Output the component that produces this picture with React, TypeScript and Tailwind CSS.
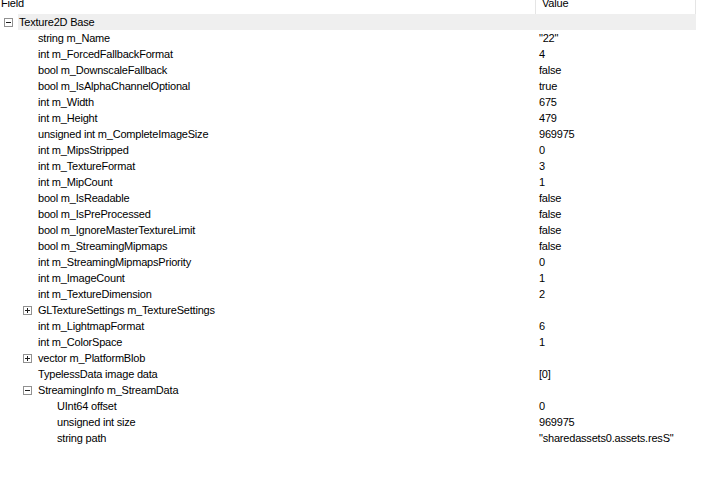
import React from "react";

type Row = {
  level: number;
  name: string;
  value?: string;
  toggle?: "open" | "closed";
  selected?: boolean;
};

const rows: Row[] = [
  { level: 0, name: "Texture2D Base", toggle: "open", selected: true },
  { level: 1, name: "string m_Name", value: '"22"' },
  { level: 1, name: "int m_ForcedFallbackFormat", value: "4" },
  { level: 1, name: "bool m_DownscaleFallback", value: "false" },
  { level: 1, name: "bool m_IsAlphaChannelOptional", value: "true" },
  { level: 1, name: "int m_Width", value: "675" },
  { level: 1, name: "int m_Height", value: "479" },
  { level: 1, name: "unsigned int m_CompleteImageSize", value: "969975" },
  { level: 1, name: "int m_MipsStripped", value: "0" },
  { level: 1, name: "int m_TextureFormat", value: "3" },
  { level: 1, name: "int m_MipCount", value: "1" },
  { level: 1, name: "bool m_IsReadable", value: "false" },
  { level: 1, name: "bool m_IsPreProcessed", value: "false" },
  { level: 1, name: "bool m_IgnoreMasterTextureLimit", value: "false" },
  { level: 1, name: "bool m_StreamingMipmaps", value: "false" },
  { level: 1, name: "int m_StreamingMipmapsPriority", value: "0" },
  { level: 1, name: "int m_ImageCount", value: "1" },
  { level: 1, name: "int m_TextureDimension", value: "2" },
  { level: 1, name: "GLTextureSettings m_TextureSettings", toggle: "closed" },
  { level: 1, name: "int m_LightmapFormat", value: "6" },
  { level: 1, name: "int m_ColorSpace", value: "1" },
  { level: 1, name: "vector m_PlatformBlob", toggle: "closed" },
  { level: 1, name: "TypelessData image data", value: "[0]" },
  { level: 1, name: "StreamingInfo m_StreamData", toggle: "open" },
  { level: 2, name: "UInt64 offset", value: "0" },
  { level: 2, name: "unsigned int size", value: "969975" },
  { level: 2, name: "string path", value: '"sharedassets0.assets.resS"' },
];

const indents = ["pl-[4px]", "pl-[23px]", "pl-[42px]"];

function Toggle({ state }: { state?: "open" | "closed" }) {
  if (!state) return <span className="w-[9px] h-[9px] shrink-0" />;
  return (
    <svg width="9" height="9" viewBox="0 0 9 9" className="shrink-0">
      <rect x="0.5" y="0.5" width="8" height="8" fill="#fff" stroke="#919191" />
      <path d="M2 4.5h5" stroke="#1e1e1e" />
      {state === "closed" && <path d="M4.5 2v5" stroke="#1e1e1e" />}
    </svg>
  );
}

export default function App() {
  return (
    <div
      className="w-[724px] h-[498px] bg-white text-black text-[11px] tracking-[-0.2px] overflow-hidden"
      style={{ fontFamily: '"Liberation Sans", Arial, sans-serif' }}
    >
      <div className="flex h-[14px] overflow-hidden">
        <div className="w-[536px] border-r border-[#e5e5e5] pl-[1px]">
          <div className="leading-[16px] -mt-[5px]">Field</div>
        </div>
        <div className="w-[160px] border-r border-[#e5e5e5] pl-[6px]">
          <div className="leading-[16px] -mt-[5px]">Value</div>
        </div>
      </div>
      <div className="flex flex-col">
        {rows.map((r, i) => (
          <div key={i} className="flex h-[16px] leading-[16px] w-[696px]">
            <div className={`w-[537px] flex items-center ${indents[r.level]}`}>
              <Toggle state={r.toggle} />
              <span
                className={`ml-[5px] pl-[1px] h-[16px] whitespace-nowrap ${
                  r.selected ? "bg-[#efefef] flex-1" : ""
                }`}
              >
                {r.name}
              </span>
            </div>
            <div
              className={`flex-1 pl-[2px] whitespace-nowrap ${
                r.selected ? "bg-[#efefef]" : ""
              }`}
            >
              {r.value}
            </div>
          </div>
        ))}
      </div>
    </div>
  );
}
